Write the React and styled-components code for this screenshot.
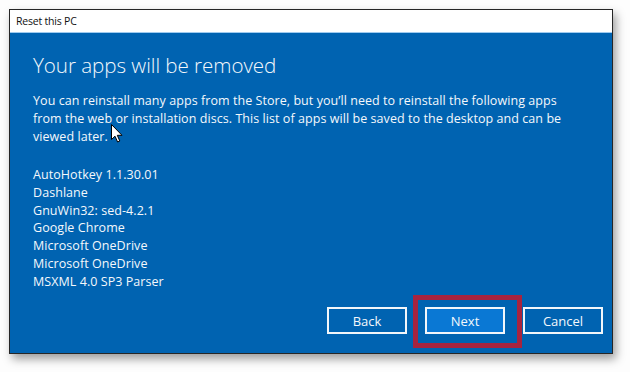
import React from 'react'
import styled, { createGlobalStyle } from 'styled-components'

const GlobalStyle = createGlobalStyle`
  html, body {
    margin: 0;
    padding: 0;
    background: #ffffff;
  }
  body {
    font-family: "Open Sans", "Noto Sans", "Liberation Sans", sans-serif;
  }
`

const Stage = styled.div`
  width: 630px;
  height: 372px;
  box-sizing: border-box;
  padding: 9px 17px 18px 9px;
  background: #fdfdfd;
`

const Window = styled.div`
  width: 604px;
  height: 345px;
  box-sizing: border-box;
  border: 1px solid #262626;
  display: flex;
  flex-direction: column;
  box-shadow: 3px 5px 9px rgba(0, 0, 0, 0.38);
`

const TitleBar = styled.div`
  height: 23px;
  flex: none;
  box-sizing: border-box;
  background: #ffffff;
  border-bottom: 1px solid #9fcbef;
  display: flex;
  align-items: center;
  padding-left: 6px;
  font-size: 10.5px;
  color: #111;
  letter-spacing: -0.2px;
`

const Content = styled.div`
  flex: 1;
  background: #0063b1;
  color: #f4f8fc;
  padding: 19px 9px 19px 23px;
  display: flex;
  flex-direction: column;
  position: relative;
`

const Heading = styled.h1`
  margin: 0;
  font-size: 20.6px;
  font-weight: 300;
  line-height: 27px;
  letter-spacing: -0.05px;
`

const Paragraph = styled.p`
  margin: 13px 0 0;
  font-size: 12.5px;
  line-height: 18px;
  letter-spacing: 0.06px;
`

const AppList = styled.ul`
  list-style: none;
  margin: 20px 0 0;
  padding: 0;
  font-size: 12.5px;
  line-height: 17.8px;
  letter-spacing: 0.06px;
`

const ButtonRow = styled.div`
  margin-top: auto;
  display: flex;
  justify-content: flex-end;
  gap: 18px;
`

const ButtonSlot = styled.div`
  position: relative;
`

const Button = styled.button`
  width: 80px;
  height: 27px;
  box-sizing: border-box;
  border: 2px solid #f2f6fa;
  background: ${p => (p.$primary ? '#0a78d4' : 'transparent')};
  color: #f4f8fc;
  font-family: inherit;
  font-size: 13px;
  padding: 0;
`

const Highlight = styled.div`
  position: absolute;
  left: -12px;
  right: -17px;
  top: -12px;
  bottom: -14px;
  border: 5px solid #a8243f;
  pointer-events: none;
`

const Cursor = styled.svg`
  position: absolute;
  left: 101px;
  top: 91px;
`

const apps = [
  'AutoHotkey 1.1.30.01',
  'Dashlane',
  'GnuWin32: sed-4.2.1',
  'Google Chrome',
  'Microsoft OneDrive',
  'Microsoft OneDrive',
  'MSXML 4.0 SP3 Parser',
]

export default function App() {
  return (
    <>
      <GlobalStyle />
      <Stage>
        <Window>
          <TitleBar>Reset this PC</TitleBar>
          <Content>
            <Heading>Your apps will be removed</Heading>
            <Paragraph>
              You can reinstall many apps from the Store, but you’ll need to reinstall the following apps
              <br />
              from the web or installation discs. This list of apps will be saved to the desktop and can be
              <br />
              viewed later.
            </Paragraph>
            <AppList>
              {apps.map((a, i) => (
                <li key={i}>{a}</li>
              ))}
            </AppList>
            <ButtonRow>
              <ButtonSlot>
                <Button>Back</Button>
              </ButtonSlot>
              <ButtonSlot>
                <Button $primary>Next</Button>
                <Highlight />
              </ButtonSlot>
              <ButtonSlot>
                <Button>Cancel</Button>
              </ButtonSlot>
            </ButtonRow>
            <Cursor width="12" height="19" viewBox="0 0 12 19">
              <path
                d="M0.5 0.5 L0.5 15.5 L4 12.2 L6.6 18 L8.8 17 L6.3 11.3 L11 11.3 Z"
                fill="#ffffff"
                stroke="#000000"
                strokeWidth="1"
                strokeLinejoin="round"
              />
            </Cursor>
          </Content>
        </Window>
      </Stage>
    </>
  )
}
